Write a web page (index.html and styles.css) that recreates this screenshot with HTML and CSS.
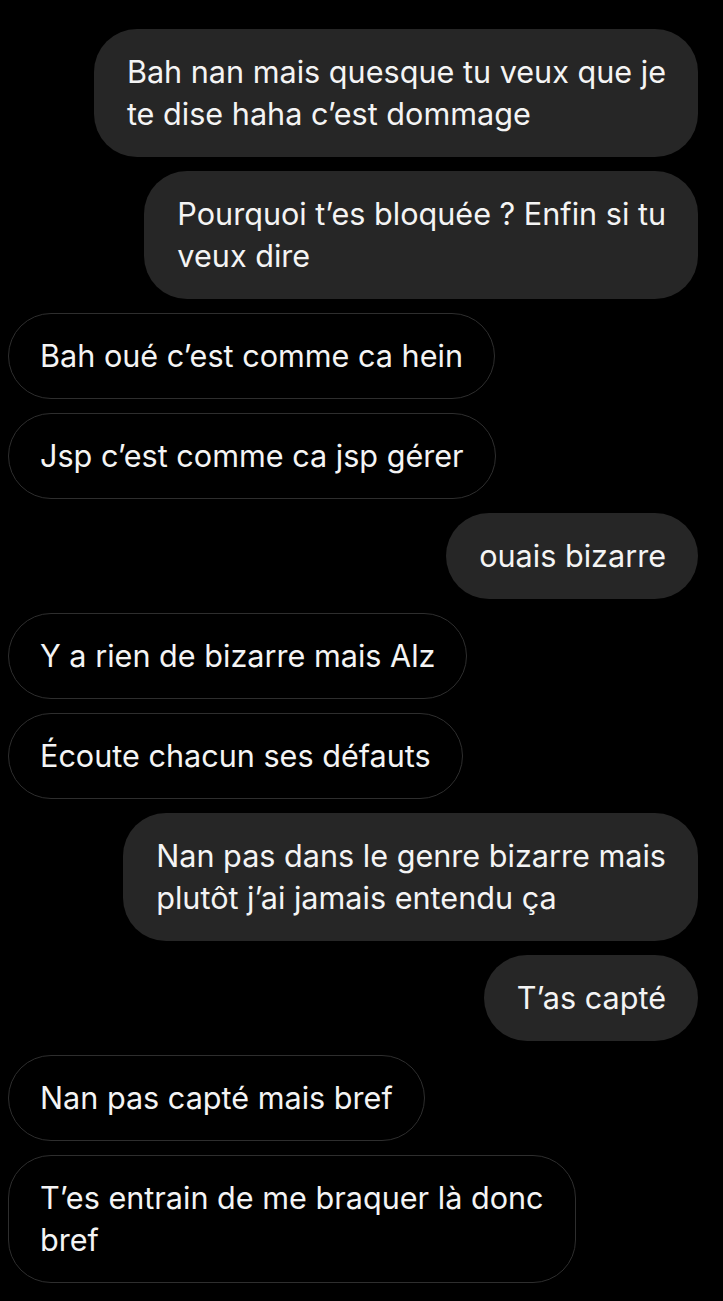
FILE: index.html
```html
<!DOCTYPE html>
<html lang="fr">
<head>
<meta charset="utf-8">
<link rel="stylesheet" href="styles.css">
</head>
<body>
<div class="chat">
  <div class="msg sent">Bah nan mais quesque tu veux que je<br>te dise haha c’est dommage</div>
  <div class="msg sent">Pourquoi t’es bloquée ? Enfin si tu<br>veux dire</div>
  <div class="msg recv">Bah oué c’est comme ca hein</div>
  <div class="msg recv">Jsp c’est comme ca jsp gérer</div>
  <div class="msg sent">ouais bizarre</div>
  <div class="msg recv">Y a rien de bizarre mais Alz</div>
  <div class="msg recv">Écoute chacun ses défauts</div>
  <div class="msg sent">Nan pas dans le genre bizarre mais<br>plutôt j’ai jamais entendu ça</div>
  <div class="msg sent">T’as capté</div>
  <div class="msg recv">Nan pas capté mais bref</div>
  <div class="msg recv">T’es entrain de me braquer là donc<br>bref</div>
</div>
</body>
</html>
```
FILE: styles.css
```css
html, body {
  margin: 0;
  padding: 0;
  background: #000;
}
body {
  width: 723px;
  height: 1301px;
  overflow: hidden;
}
.chat {
  display: flex;
  flex-direction: column;
  gap: 14px;
  padding: 29px 25px 0 8px;
}
.msg {
  font-family: Inter, "Noto Sans", sans-serif;
  font-size: 30.6px;
  line-height: 42px;
  color: #f4f4f4;
  padding: 22px 32px 22px 33px;
  border-radius: 43px;
  white-space: nowrap;
  box-sizing: border-box;
}
.sent {
  align-self: flex-end;
  background: #262626;
}
.recv {
  align-self: flex-start;
  border: 1px solid #2e2e2e;
  padding: 21px 31px 21px 31px;
}
```
